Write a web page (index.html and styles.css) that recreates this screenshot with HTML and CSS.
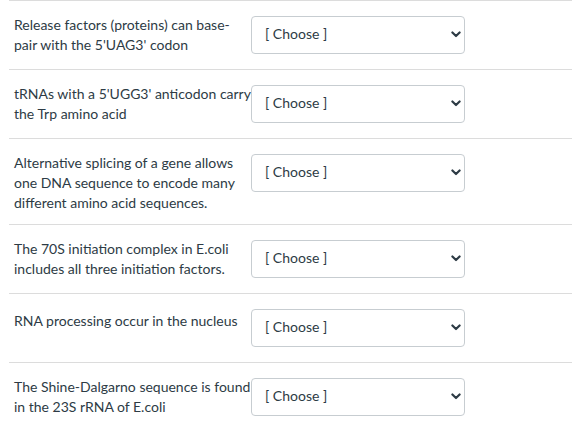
FILE: index.html
```html
<!DOCTYPE html>
<html lang="en">
<head>
<meta charset="utf-8">
<title>Matching</title>
<link rel="stylesheet" href="styles.css">
</head>
<body>
<div class="answers">
  <div class="answer">
    <div class="answer-text">Release factors (proteins) can base-pair with the 5'UAG3' codon</div>
    <div class="answer-select">
      <select class="choose"><option>[ Choose ]</option></select>
      <svg class="chevron" width="10" height="7" viewBox="0 0 10 7"><path d="M1.4 1.5 L5 5 L8.6 1.5" fill="none" stroke="#2D3B45" stroke-width="2.2" stroke-linecap="round" stroke-linejoin="round"/></svg>
    </div>
  </div>
  <div class="answer">
    <div class="answer-text">tRNAs with a 5'UGG3' anticodon carry the Trp amino acid</div>
    <div class="answer-select">
      <select class="choose"><option>[ Choose ]</option></select>
      <svg class="chevron" width="10" height="7" viewBox="0 0 10 7"><path d="M1.4 1.5 L5 5 L8.6 1.5" fill="none" stroke="#2D3B45" stroke-width="2.2" stroke-linecap="round" stroke-linejoin="round"/></svg>
    </div>
  </div>
  <div class="answer">
    <div class="answer-text">Alternative splicing of a gene allows one DNA sequence to encode many different amino acid sequences.</div>
    <div class="answer-select">
      <select class="choose"><option>[ Choose ]</option></select>
      <svg class="chevron" width="10" height="7" viewBox="0 0 10 7"><path d="M1.4 1.5 L5 5 L8.6 1.5" fill="none" stroke="#2D3B45" stroke-width="2.2" stroke-linecap="round" stroke-linejoin="round"/></svg>
    </div>
  </div>
  <div class="answer">
    <div class="answer-text">The 70S initiation complex in E.coli includes all three initiation factors.</div>
    <div class="answer-select">
      <select class="choose"><option>[ Choose ]</option></select>
      <svg class="chevron" width="10" height="7" viewBox="0 0 10 7"><path d="M1.4 1.5 L5 5 L8.6 1.5" fill="none" stroke="#2D3B45" stroke-width="2.2" stroke-linecap="round" stroke-linejoin="round"/></svg>
    </div>
  </div>
  <div class="answer">
    <div class="answer-text answer-text--single">RNA processing occur in the nucleus</div>
    <div class="answer-select">
      <select class="choose"><option>[ Choose ]</option></select>
      <svg class="chevron" width="10" height="7" viewBox="0 0 10 7"><path d="M1.4 1.5 L5 5 L8.6 1.5" fill="none" stroke="#2D3B45" stroke-width="2.2" stroke-linecap="round" stroke-linejoin="round"/></svg>
    </div>
  </div>
  <div class="answer">
    <div class="answer-text">The Shine-Dalgarno sequence is found in the 23S rRNA of E.coli</div>
    <div class="answer-select">
      <select class="choose"><option>[ Choose ]</option></select>
      <svg class="chevron" width="10" height="7" viewBox="0 0 10 7"><path d="M1.4 1.5 L5 5 L8.6 1.5" fill="none" stroke="#2D3B45" stroke-width="2.2" stroke-linecap="round" stroke-linejoin="round"/></svg>
    </div>
  </div>
</div>
</body>
</html>
```
FILE: styles.css
```css
html, body {
  margin: 0;
  padding: 0;
  background: #ffffff;
}

body {
  font-family: Lato, "Open Sans", "Liberation Sans", sans-serif;
  font-size: 14px;
  color: #2D3B45;
}

.answers {
  margin-left: 9px;
}

.answer {
  display: flex;
  align-items: flex-start;
  border-top: 1px solid #dcdcdc;
}

.answer-text {
  box-sizing: border-box;
  width: 242px;
  flex: 0 0 242px;
  padding: 14px 0 11px 5px;
  line-height: 20px;
}

.answer-text--single {
  padding-top: 17px;
}

.answer-select {
  position: relative;
  margin: 15px 0 15px 0;
}

.choose {
  display: block;
  box-sizing: border-box;
  width: 214px;
  height: 38px;
  margin: 0;
  padding: 0 24px 4px 13px;
  border: 1px solid #c7cdd1;
  border-radius: 4px;
  background: #ffffff;
  font-family: Lato, "Open Sans", "Liberation Sans", sans-serif;
  font-size: 14px;
  color: #2D3B45;
  -webkit-appearance: none;
  appearance: none;
  outline: none;
}

.chevron {
  position: absolute;
  right: 4px;
  top: 15px;
  pointer-events: none;
}
```
